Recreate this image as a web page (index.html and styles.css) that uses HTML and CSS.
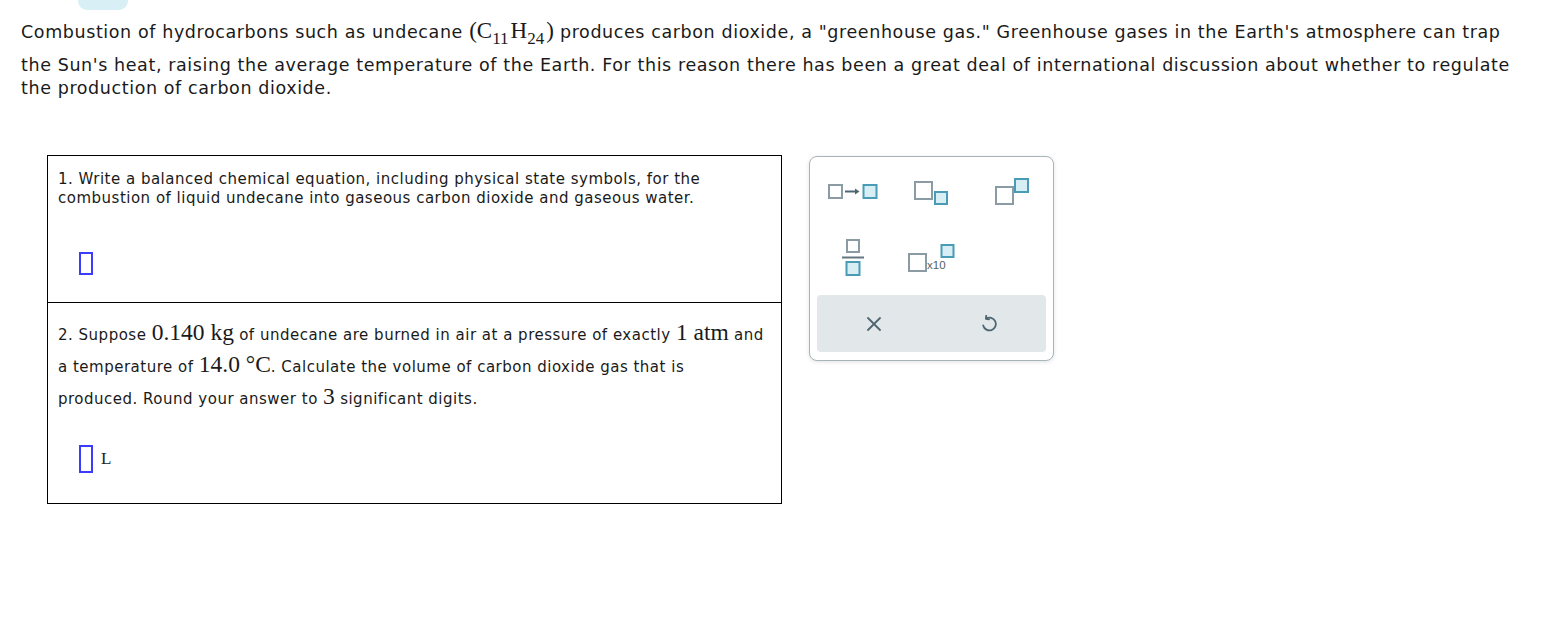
FILE: index.html
```html
<!DOCTYPE html>
<html>
<head>
<meta charset="utf-8">
<link rel="stylesheet" href="styles.css">
</head>
<body>
<div class="page">
  <div class="tab-tail"></div>
  <p class="intro">Combustion of hydrocarbons such as undecane <span class="math">(C<sub>11</sub>H<sub>24</sub>)</span> produces carbon dioxide, a "greenhouse gas." Greenhouse gases in the Earth's atmosphere can trap the Sun's heat, raising the average temperature of the Earth. For this reason there has been a great deal of international discussion about whether to regulate the production of carbon dioxide.</p>

  <div class="work">
    <div class="questions">
      <section class="q q1">
        <p class="q-text">1. Write a balanced chemical equation, including physical state symbols, for the combustion of liquid undecane into gaseous carbon dioxide and gaseous water.</p>
        <div class="answer"><span class="slot slot-sm"></span></div>
      </section>
      <section class="q q2">
        <p class="q-text tall">2. Suppose <span class="m">0.140 kg</span> of undecane are burned in air at a pressure of exactly <span class="m">1 atm</span> and a temperature of <span class="m">14.0 °C</span>. Calculate the volume of carbon dioxide gas that is produced. Round your answer to <span class="m">3</span> significant digits.</p>
        <div class="answer"><span class="slot slot-lg"></span><span class="unit">L</span></div>
      </section>
    </div>

    <div class="palette">
      <div class="tools">
        <div class="tool">
          <svg width="50" height="16" viewBox="0 0 50 16">
            <rect x="1" y="1" width="13" height="13" class="g"/>
            <line x1="17" y1="7.5" x2="29" y2="7.5" class="ar"/>
            <path d="M27 4.5 L31.5 7.5 L27 10.5 Z" class="arh"/>
            <rect x="35.5" y="1" width="13" height="13" class="b"/>
          </svg>
        </div>
        <div class="tool">
          <svg width="35" height="25" viewBox="0 0 35 25">
            <rect x="1" y="1" width="17" height="17" class="g"/>
            <rect x="21" y="11" width="12" height="12" class="b"/>
          </svg>
        </div>
        <div class="tool">
          <svg width="35" height="28" viewBox="0 0 35 28">
            <rect x="1" y="9" width="17" height="17" class="g"/>
            <rect x="20" y="1" width="13" height="13" class="b"/>
          </svg>
        </div>
        <div class="tool">
          <svg width="24" height="38" viewBox="0 0 24 38">
            <rect x="6" y="1" width="12" height="12" class="g"/>
            <line x1="1" y1="18.5" x2="23" y2="18.5" class="ln"/>
            <rect x="5.5" y="23" width="13" height="13" class="b"/>
          </svg>
        </div>
        <div class="tool">
          <svg width="48" height="28" viewBox="0 0 48 28">
            <rect x="1" y="10" width="17" height="17" class="g"/>
            <text x="19" y="25" class="x10">x10</text>
            <rect x="33.5" y="1" width="12" height="12" class="b"/>
          </svg>
        </div>
      </div>
      <div class="actions">
        <button class="act" aria-label="clear">
          <svg width="16" height="16" viewBox="0 0 16 16"><path d="M2 2 L14 14 M14 2 L2 14" class="ic"/></svg>
        </button>
        <button class="act" aria-label="undo">
          <svg width="18" height="18" viewBox="0 0 18 18">
            <path d="M6 3.6 A6.4 6.4 0 1 1 3.2 10.5" class="ic"/>
            <path d="M6.2 0.8 L6 3.8 L9 4.3" class="ic"/>
          </svg>
        </button>
      </div>
    </div>
  </div>
</div>
</body>
</html>
```

FILE: styles.css
```css
html, body {
  margin: 0;
  padding: 0;
  background: #ffffff;
}

.page {
  padding: 0 21px;
  font-family: Verdana, "DejaVu Sans", sans-serif;
  color: #1a1a1a;
}

.tab-tail {
  width: 50px;
  height: 10px;
  margin-left: 57px;
  background: #d9eff6;
  border-radius: 0 0 9px 9px;
}

.intro {
  margin: 9px 0 0 0;
  font-size: 17.5px;
  letter-spacing: 0.6px;
  line-height: 23px;
  max-width: 1500px;
}

.math {
  display: inline-block;
  padding-bottom: 12px;
  line-height: 23px;
  letter-spacing: 0;
  font-family: "Liberation Serif", "Times New Roman", serif;
  font-size: 23px;
}

.math sub {
  font-size: 17px;
  vertical-align: -6px;
  line-height: 0;
  margin-right: 2px;
}

.work {
  display: flex;
  align-items: flex-start;
  gap: 27px;
  margin: 55px 0 0 26px;
}

.questions {
  width: 733px;
  border: 1px solid #000;
}

.q {
  padding: 14px 10px 0 10px;
}

.q1 {
  height: 132px;
  border-bottom: 1px solid #000;
}

.q2 {
  height: 184px;
  padding-top: 16px;
}

.q-text {
  margin: 0;
  font-size: 15px;
  letter-spacing: 0.5px;
  line-height: 19px;
}

.q-text.tall {
  line-height: 32px;
  max-width: 708px;
}

.m {
  font-family: "Liberation Serif", "Times New Roman", serif;
  font-size: 23.5px;
  letter-spacing: 0;
  line-height: normal;
}

.answer {
  display: flex;
  align-items: center;
  gap: 8px;
  padding-left: 21px;
}

.q1 .answer {
  margin-top: 44px;
}

.q2 .answer {
  margin-top: 30px;
}

.slot {
  display: inline-block;
  border: 2px solid #3c3cff;
  box-sizing: border-box;
  width: 14px;
}

.slot-sm { height: 23px; }
.slot-lg { height: 28px; }

.unit {
  font-family: "Liberation Serif", "Times New Roman", serif;
  font-size: 17px;
  color: #222;
}

.palette {
  width: 229px;
  margin-top: 1px;
  border: 1px solid #a7b4ba;
  border-radius: 8px;
  box-shadow: 0 1px 4px rgba(0, 0, 0, 0.12);
  background: #fff;
  padding: 2px 7px 8px 7px;
}

.tools {
  display: grid;
  grid-template-columns: repeat(3, 1fr);
  grid-auto-rows: 66px;
  margin: 0 -7px;
}

.tool {
  display: flex;
  align-items: center;
  justify-content: center;
}

.tools .tool:nth-child(1) { padding-left: 4px; }
.tools .tool:nth-child(2) { padding-top: 2px; }
.tools .tool:nth-child(4) { padding-left: 5px; }

.g {
  fill: #ffffff;
  stroke: #8a9ba3;
  stroke-width: 2;
}

.b {
  fill: #d6eef4;
  stroke: #4a9bb5;
  stroke-width: 2;
}

.ar {
  stroke: #4d6672;
  stroke-width: 2;
}

.arh {
  fill: #4d6672;
}

.ln {
  stroke: #62777f;
  stroke-width: 2;
}

.x10 {
  font-family: "Liberation Sans", Arial, sans-serif;
  font-size: 11.5px;
  fill: #555f64;
}

.actions {
  display: grid;
  grid-template-columns: 1fr 1fr;
  height: 57px;
  margin-top: 4px;
  background: #e2e7ea;
  border-radius: 4px;
}

.act {
  border: 0;
  background: transparent;
  display: flex;
  align-items: center;
  justify-content: center;
  padding: 0;
  cursor: pointer;
}

.ic {
  fill: none;
  stroke: #4d6672;
  stroke-width: 1.8;
  stroke-linecap: round;
  stroke-linejoin: round;
}
```
